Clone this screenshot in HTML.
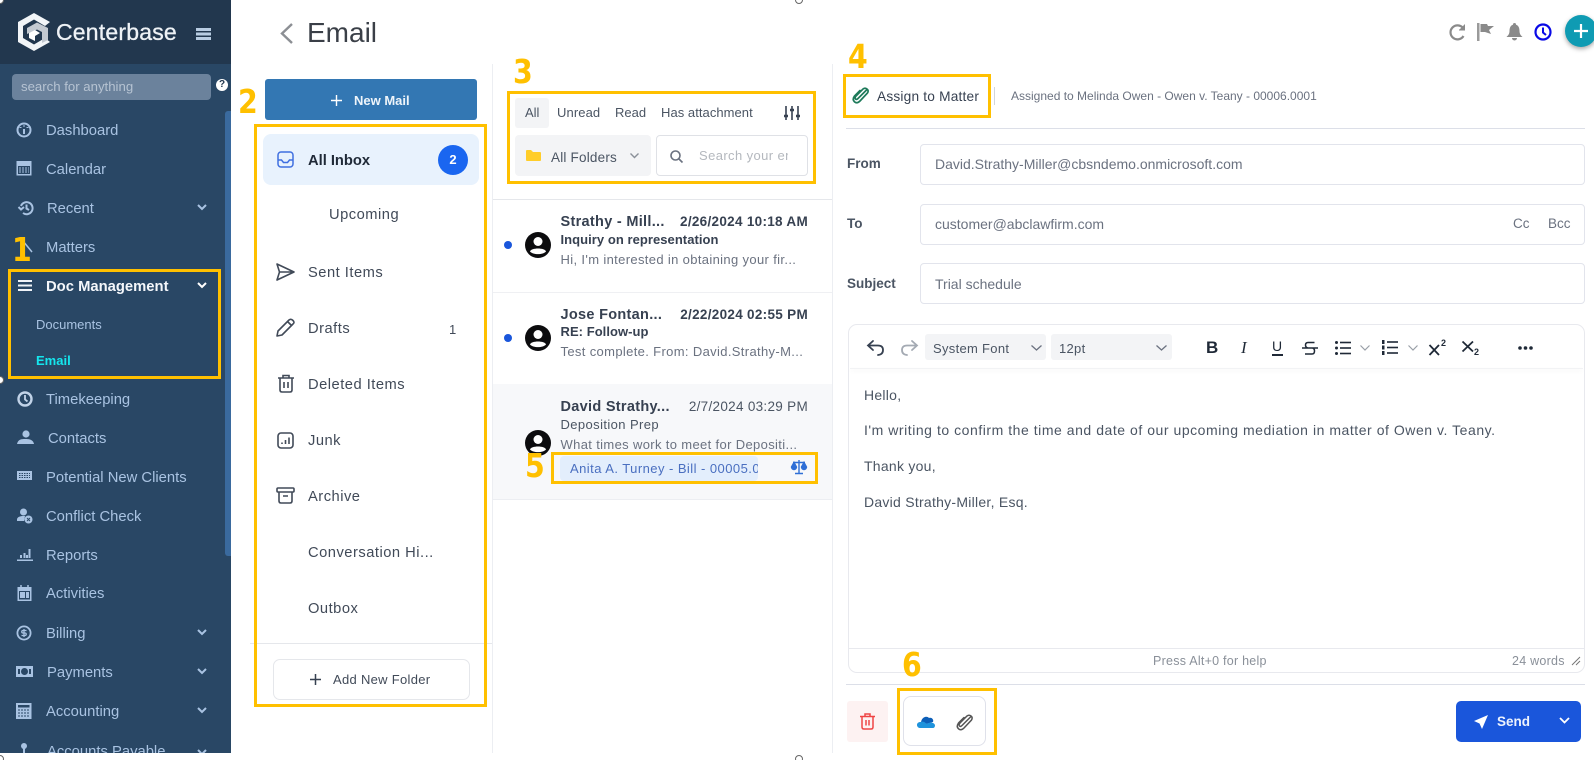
<!DOCTYPE html>
<html><head><meta charset="utf-8"><title>Email</title>
<style>
html,body{margin:0;padding:0;background:#fff;width:1594px;height:760px;overflow:hidden}
body{position:relative;font-family:"Liberation Sans",sans-serif;color:#374151}
.a{position:absolute}
.t{position:absolute;line-height:20px;height:20px;white-space:nowrap}
svg{position:absolute;overflow:visible}
.y{position:absolute;border:3px solid #ffc000;box-sizing:border-box}
.d{position:absolute;font:bold 33px/33px "DejaVu Sans",sans-serif;color:#ffc000;transform:scaleX(.86);transform-origin:left top}
.n{font-size:14.8px;color:#a9c3e2;left:46px}
.f{font-size:14.7px;color:#414a58;letter-spacing:.5px;left:308px}
.i{position:absolute;left:920px;width:665px;height:41px;box-sizing:border-box;border:1.5px solid #e2e4ec;border-radius:4px}
.v{font-size:14px;color:#6b7280;left:935px;letter-spacing:0}
.l{font-size:13.5px;font-weight:bold;color:#4b5563;left:847px}
.m{left:560.5px;font-size:14.5px;font-weight:bold;color:#374151;letter-spacing:.3px}
.dt{right:786px;font-size:13.5px;color:#374151;letter-spacing:.3px}
.s{left:560.5px;font-size:13px;color:#374151;letter-spacing:.05px}
.p{left:560.5px;font-size:13px;color:#6b7280;letter-spacing:.35px}
.b{font-size:14px;color:#4b5563;left:864px;letter-spacing:.26px}
.h{width:8px;height:8px;border:1px solid #666;border-radius:50%;background:#fff;position:absolute;box-sizing:border-box}
</style></head><body>

<!-- SIDEBAR -->
<div class="a" style="left:0;top:0;width:231px;height:753px;background:#294765"></div>
<div class="a" style="left:0;top:0;width:231px;height:64px;background:#22374e"></div>
<svg style="left:17px;top:13px" width="34" height="38" viewBox="0 0 34 38">
<path d="M17 0 33 9 28 13 17 6.500 6 13V25L17 31.500 28 25 33 29 17 38 1 29V9Z" fill="#f2f5f8"/>
<path d="M10 15 20 9.500 31 15V27L25 30V19L20 16.500 10 21Z" fill="#c3c9d1"/>
<path d="M12 20 18 17 23 20 18 23V28L12 25Z" fill="#fff"/>
</svg>
<div class="t" style="left:56px;top:19px;height:26px;line-height:26px;font-size:23px;color:#eef2f6;letter-spacing:.2px;-webkit-text-stroke:.3px #eef2f6">Centerbase</div>
<div class="a" style="left:196px;top:28px;width:15px;height:2.500px;background:#b8cce2;box-shadow:0 4.500px 0 #b8cce2,0 9px 0 #b8cce2"></div>
<div class="a" style="left:12px;top:74px;width:199px;height:26px;background:#6b829c;border-radius:4px"></div>
<div class="t" style="left:21px;top:77px;font-size:13.2px;color:#b6c3d2">search for anything</div>
<div class="a" style="left:216px;top:79px;width:12px;height:12px;background:#fff;border-radius:50%;font:bold 10px/12px 'Liberation Sans',sans-serif;color:#22374e;text-align:center">?</div>
<div class="a" style="left:225px;top:111px;width:6px;height:445px;background:#3a6a9e;border-radius:3px 0 0 3px"></div>

<div class="t n" style="top:121px">Dashboard</div>
<div class="t n" style="top:160px">Calendar</div>
<div class="t n" style="top:199px;left:47px">Recent</div>
<div class="t n" style="top:238px">Matters</div>
<div class="t" style="left:46px;top:277px;font-size:14.8px;font-weight:bold;color:#f4f7fb">Doc Management</div>
<div class="t n" style="left:36px;top:315px;font-size:13px;color:#a9c3e2">Documents</div>
<div class="t" style="left:36px;top:351px;font-size:13px;font-weight:bold;color:#14e6ee">Email</div>
<div class="t n" style="top:390px">Timekeeping</div>
<div class="t n" style="top:429px;left:48px">Contacts</div>
<div class="t n" style="top:468px">Potential New Clients</div>
<div class="t n" style="top:507px">Conflict Check</div>
<div class="t n" style="top:546px">Reports</div>
<div class="t n" style="top:584px">Activities</div>
<div class="t n" style="top:624px">Billing</div>
<div class="t n" style="top:663px;left:47px">Payments</div>
<div class="t n" style="top:702px">Accounting</div>
<div class="a" style="left:0;top:735px;width:231px;height:18px;overflow:hidden"><div class="t n" style="top:7px;left:47px">Accounts Payable</div>
<svg style="left:20px;top:8px" width="8" height="10"><circle cx="4" cy="3" r="3" fill="#a9c3e2"/><path d="M4 5V10" stroke="#a9c3e2" stroke-width="2"/></svg>
<svg style="left:197px;top:14px" width="10" height="6" fill="none" stroke="#a9c3e2" stroke-width="2"><path d="M1 1 5 5 9 1"/></svg></div>

<!-- nav icons -->
<svg style="left:16px;top:122px" width="16" height="16" fill="none" stroke="#a9c3e2" stroke-width="2"><circle cx="8" cy="8" r="6.500"/><path d="M8 7V12M4.500 5V6M11.500 5V6M8 3.500V4.500"/></svg>
<svg style="left:16px;top:160px" width="16" height="16"><rect x="0.500" y="1" width="15" height="14.500" fill="#a9c3e2"/><rect x="2" y="6" width="12" height="8" fill="#294765"/><path d="M3 8H13M3 10H13M3 12H13" stroke="#a9c3e2" stroke-dasharray="2 1"/></svg>
<svg style="left:18px;top:200px" width="16" height="16" fill="none" stroke="#a9c3e2" stroke-width="2"><path d="M3 6A6 6 0 1 1 5 13M0.500 7 3 9.500 6 7M8.500 4.500V8.500L11 10"/></svg>
<svg style="left:22px;top:240px" width="11" height="14" fill="none" stroke="#a9c3e2" stroke-width="1.500"><path d="M1 1 10 12"/></svg>
<div class="a" style="left:18px;top:280px;width:14px;height:2px;background:#f0f4f8;box-shadow:0 4.500px 0 #f0f4f8,0 9px 0 #f0f4f8"></div>
<svg style="left:17px;top:391px" width="16" height="16" fill="none" stroke="#c1d3e8" stroke-width="2.400"><circle cx="8" cy="8" r="6.500"/><path d="M8 4V8.500L10.500 10.500" stroke-width="1.800"/></svg>
<svg style="left:17px;top:430px" width="17" height="15" fill="#a9c3e2"><circle cx="9" cy="4" r="3.600"/><path d="M0 14C1 9 5 9 8 9S16 9 17 14Z"/><path d="M4 2C3 5 4 7 6 8" stroke="#294765" fill="none"/></svg>
<svg style="left:17px;top:471px" width="15" height="9"><rect width="15" height="9" fill="#a9c3e2"/><path d="M2 2.500H13M2 4.500H13M2 6.500H13" stroke="#294765" stroke-dasharray="1.500 1"/></svg>
<svg style="left:17px;top:508px" width="16" height="16" fill="#a9c3e2"><circle cx="6.500" cy="4" r="3.500"/><path d="M0 11C1 8 5 8 8 8L7 13H0Z"/><circle cx="11.500" cy="11.500" r="4"/><path d="M10 10 13 13M13 10 10 13" stroke="#294765"/></svg>
<svg style="left:17px;top:548px" width="16" height="13" fill="#a9c3e2"><rect x="0" y="11.500" width="16" height="1.500"/><rect x="3" y="7" width="2" height="3"/><rect x="6.500" y="5" width="2" height="5"/><rect x="9" y="7" width="2" height="3"/><rect x="11.500" y="1" width="2" height="9"/></svg>
<svg style="left:17px;top:585px" width="15" height="16"><rect x="0.500" y="2" width="14" height="14" fill="#a9c3e2"/><rect x="2" y="6" width="11" height="8.500" fill="#294765"/><rect x="3" y="7" width="5" height="6" fill="#a9c3e2"/><rect x="9" y="7" width="3" height="6" fill="#a9c3e2"/><path d="M4 0V3M11 0V3" stroke="#a9c3e2" stroke-width="1.500"/></svg>
<svg style="left:16px;top:625px" width="16" height="16" fill="none" stroke="#a9c3e2" stroke-width="1.800"><circle cx="8" cy="8" r="6.600"/><path d="M10.500 5.500H7A1.200 1.200 0 0 0 7 8H9A1.200 1.200 0 0 1 9 10.500H5.500M8 4V12" stroke-width="1.300"/></svg>
<svg style="left:16px;top:666px" width="17" height="11"><rect width="17" height="11" fill="#a9c3e2"/><circle cx="8.500" cy="5.500" r="3.500" fill="#294765"/><rect x="2" y="3" width="2" height="5" fill="#294765"/><rect x="13" y="3" width="2" height="5" fill="#294765"/></svg>
<svg style="left:16px;top:703px" width="16" height="16"><rect width="15.500" height="16" fill="#a9c3e2"/><rect x="2" y="2" width="11.500" height="2.500" fill="#294765"/><path d="M2 7H13.500M2 10H13.500M2 13H13.500" stroke="#294765" stroke-dasharray="2 1"/></svg>
<!-- nav chevrons -->
<svg style="left:197px;top:204px" width="10" height="6" fill="none" stroke="#a9c3e2" stroke-width="2"><path d="M1 1 5 5 9 1"/></svg>
<svg style="left:197px;top:282px" width="10" height="6" fill="none" stroke="#fff" stroke-width="2"><path d="M1 1 5 5 9 1"/></svg>
<svg style="left:197px;top:629px" width="10" height="6" fill="none" stroke="#a9c3e2" stroke-width="2"><path d="M1 1 5 5 9 1"/></svg>
<svg style="left:197px;top:668px" width="10" height="6" fill="none" stroke="#a9c3e2" stroke-width="2"><path d="M1 1 5 5 9 1"/></svg>
<svg style="left:197px;top:707px" width="10" height="6" fill="none" stroke="#a9c3e2" stroke-width="2"><path d="M1 1 5 5 9 1"/></svg>

<div class="y" style="left:8px;top:269px;width:213px;height:110px"></div>
<div class="d" style="left:12px;top:233px">1</div>

<!-- TITLE -->
<svg style="left:280px;top:23px" width="13" height="21" fill="none" stroke="#8c8f94" stroke-width="2.400"><path d="M12 1 2 10.500 12 20"/></svg>
<div class="t" style="left:307px;top:17px;height:32px;line-height:32px;font-size:28px;color:#3a3f47">Email</div>

<!-- COLUMN LINES -->
<div class="a" style="left:492px;top:64px;width:1px;height:689px;background:#eceef2"></div>
<div class="a" style="left:832px;top:64px;width:1px;height:689px;background:#eceef2"></div>

<!-- FOLDERS -->
<div class="a" style="left:265px;top:79px;width:212px;height:41px;background:#3377b3;border-radius:3px"></div>
<svg style="left:331px;top:95px" width="11" height="11" stroke="#fff" stroke-width="1.400"><path d="M5.500 0V11M0 5.500H11"/></svg>
<div class="t" style="left:354px;top:91px;font-size:13px;font-weight:bold;color:#eef4fa">New Mail</div>
<div class="a" style="left:263px;top:134px;width:216px;height:51px;background:#e8f2fd;border-radius:8px"></div>
<svg style="left:277px;top:151px" width="17" height="17" fill="none" stroke="#3f6fe0" stroke-width="1.500"><rect x="1" y="1" width="15" height="15" rx="3"/><path d="M1 9H4.500L6.500 11.500H10.500L12.500 9H16"/></svg>
<div class="t f" style="top:151px;font-weight:bold;color:#1f2937;letter-spacing:0">All Inbox</div>
<div class="a" style="left:438px;top:145px;width:30px;height:30px;border-radius:50%;background:#1a66f0;font:bold 13px/30px 'Liberation Sans',sans-serif;color:#fff;text-align:center">2</div>
<div class="t f" style="left:329px;top:205px">Upcoming</div>
<svg style="left:276px;top:262px" width="19" height="19" fill="none" stroke="#414a58" stroke-width="1.600" stroke-linejoin="round"><path d="M1 2 18 10 1 18 3.500 10ZM3.500 10H18"/></svg>
<div class="t f" style="top:263px">Sent Items</div>
<svg style="left:276px;top:318px" width="19" height="19" fill="none" stroke="#414a58" stroke-width="1.600" stroke-linejoin="round"><path d="M1 18 2 13 13 2Q15 .5 17 2.500T17 6L6 17ZM11.500 3.500 15.500 7.500"/></svg>
<div class="t f" style="top:319px">Drafts</div>
<div class="t" style="left:449px;top:320px;font-size:13px;color:#414a58">1</div>
<svg style="left:278px;top:374px" width="16" height="19" fill="none" stroke="#414a58" stroke-width="1.600"><path d="M0 4H16M5 4V1.500H11V4M2 4V16Q2 18 4 18H12Q14 18 14 16V4M6 8V14M10 8V14"/></svg>
<div class="t f" style="top:375px">Deleted Items</div>
<svg style="left:277px;top:432px" width="17" height="17" fill="none" stroke="#414a58" stroke-width="1.600"><rect x="1" y="1" width="15" height="15" rx="3"/><path d="M5 12V10.500M8.500 12V8M12 12V5.500"/></svg>
<div class="t f" style="top:431px">Junk</div>
<svg style="left:276px;top:487px" width="19" height="17" fill="none" stroke="#414a58" stroke-width="1.600"><rect x="1" y="1" width="17" height="4" rx="1"/><path d="M3 5V14Q3 16 5 16H14Q16 16 16 14V5M7 9H12"/></svg>
<div class="t f" style="top:487px">Archive</div>
<div class="t f" style="top:543px">Conversation Hi...</div>
<div class="t f" style="top:599px">Outbox</div>
<div class="a" style="left:250px;top:643px;width:242px;height:1px;background:#e5e7eb"></div>
<div class="a" style="left:273px;top:659px;width:197px;height:41px;box-sizing:border-box;border:1px solid #e5e7eb;border-radius:7px"></div>
<svg style="left:310px;top:674px" width="11" height="11" stroke="#374151" stroke-width="1.500"><path d="M5.500 0V11M0 5.500H11"/></svg>
<div class="t" style="left:333px;top:670px;font-size:13px;color:#414a58;letter-spacing:.3px">Add New Folder</div>
<div class="y" style="left:254px;top:124px;width:233px;height:583px"></div>
<div class="d" style="left:238px;top:85px">2</div>

<!-- LIST FILTERS -->
<div class="a" style="left:515px;top:98px;width:34px;height:30px;background:#f3f4f6;border-radius:3px"></div>
<div class="t" style="left:525px;top:103px;font-size:13px;color:#4b5563">All</div>
<div class="t" style="left:557px;top:103px;font-size:13px;color:#4b5563;letter-spacing:.1px">Unread</div>
<div class="t" style="left:615px;top:103px;font-size:13px;color:#4b5563">Read</div>
<div class="t" style="left:661px;top:103px;font-size:13px;color:#4b5563;letter-spacing:.05px">Has attachment</div>
<svg style="left:784px;top:106px" width="16" height="14" stroke="#374151" stroke-width="1.600"><path d="M2 0V14M8 0V14M14 0V14"/><path d="M0 10H4M6 4H10M12 10H16" stroke-width="2.400"/></svg>
<div class="a" style="left:515px;top:135px;width:136px;height:41px;background:#f3f4f6;border-radius:4px"></div>
<svg style="left:526px;top:150px" width="15" height="11"><path d="M0 1Q0 0 1 0H5L7 2H14Q15 2 15 3V10Q15 11 14 11H1Q0 11 0 10Z" fill="#ffcd29"/></svg>
<div class="t" style="left:551px;top:148px;font-size:13.500px;color:#4b5563;letter-spacing:.2px">All Folders</div>
<svg style="left:630px;top:153px" width="9" height="6" fill="none" stroke="#8a9099" stroke-width="1.400"><path d="M.5 .5 4.500 4.500 8.500 .5"/></svg>
<div class="a" style="left:656px;top:135px;width:152px;height:41px;box-sizing:border-box;border:1.500px solid #dfe1e6;border-radius:4px"></div>
<svg style="left:670px;top:150px" width="13" height="13" fill="none" stroke="#6b7280" stroke-width="1.600"><circle cx="5.500" cy="5.500" r="4.500"/><path d="M9 9 12.500 12.500"/></svg>
<div class="a" style="left:699px;top:145px;width:89px;height:22px;overflow:hidden"><div class="t" style="left:0;top:1px;font-size:13px;color:#b4b8be;letter-spacing:.4px">Search your email</div></div>
<div class="y" style="left:507px;top:91px;width:309px;height:93px"></div>
<div class="d" style="left:513px;top:55px">3</div>

<!-- LIST ITEMS -->
<div class="a" style="left:493px;top:199px;width:339px;height:1px;background:#e5e7eb"></div>
<div class="a" style="left:493px;top:292px;width:339px;height:1px;background:#eff0f3"></div>
<div class="a" style="left:493px;top:384px;width:339px;height:115px;background:#f7f8fa;border-bottom:1px solid #eceef2"></div>

<div class="a" style="left:504px;top:241px;width:8px;height:8px;border-radius:50%;background:#1a56db"></div>
<div class="a" style="left:504px;top:334px;width:8px;height:8px;border-radius:50%;background:#1a56db"></div>
<svg style="left:525px;top:232px" width="26" height="26"><circle cx="13" cy="13" r="13" fill="#0c0c0e"/><circle cx="13" cy="9.500" r="4.500" fill="#fff"/><path d="M5 19.500C6 15.500 20 15.500 21 19.500 18 23 8 23 5 19.500Z" fill="#fff"/></svg>
<svg style="left:525px;top:325px" width="26" height="26"><circle cx="13" cy="13" r="13" fill="#0c0c0e"/><circle cx="13" cy="9.500" r="4.500" fill="#fff"/><path d="M5 19.500C6 15.500 20 15.500 21 19.500 18 23 8 23 5 19.500Z" fill="#fff"/></svg>
<svg style="left:525px;top:430px" width="26" height="26"><circle cx="13" cy="13" r="13" fill="#0c0c0e"/><circle cx="13" cy="9.500" r="4.500" fill="#fff"/><path d="M5 19.500C6 15.500 20 15.500 21 19.500 18 23 8 23 5 19.500Z" fill="#fff"/></svg>

<div class="t m" style="top:212px">Strathy - Mill...</div>
<div class="t dt" style="top:212px;font-weight:bold">2/26/2024 10:18 AM</div>
<div class="t s" style="top:230px;font-weight:bold">Inquiry on representation</div>
<div class="t p" style="top:250px">Hi, I'm interested in obtaining your fir...</div>

<div class="t m" style="top:305px">Jose Fontan...</div>
<div class="t dt" style="top:305px;font-weight:bold">2/22/2024 02:55 PM</div>
<div class="t s" style="top:322px;font-weight:bold">RE: Follow-up</div>
<div class="t p" style="top:342px">Test complete. From: David.Strathy-M...</div>

<div class="t m" style="top:397px">David Strathy...</div>
<div class="t dt" style="top:397px;color:#4b5563">2/7/2024 03:29 PM</div>
<div class="t s" style="top:415px;color:#4b5563;letter-spacing:.4px">Deposition Prep</div>
<div class="t p" style="top:435px">What times work to meet for Depositi...</div>

<div class="a" style="left:560px;top:456px;width:198px;height:25px;background:#e3eefc;border-radius:4px;overflow:hidden"><div class="t" style="left:10px;top:3px;font-size:13px;color:#4a6fc0;letter-spacing:.45px">Anita A. Turney - Bill - 00005.0001</div></div>
<svg style="left:791px;top:460px" width="16" height="15" fill="none" stroke="#2f6fd6" stroke-width="1.400"><path d="M8 0V13M4 13.500H12M2 2.500H14"/><path d="M.5 7 3 2.500 5.500 7A2.500 2.500 0 0 1 .5 7ZM10.500 7 13 2.500 15.500 7A2.500 2.500 0 0 1 10.500 7Z" fill="#2f6fd6"/></svg>
<div class="y" style="left:551px;top:452px;width:267px;height:32px"></div>
<div class="d" style="left:525px;top:449px">5</div>

<!-- COMPOSE HEADER -->
<svg style="left:852px;top:87px" width="17" height="17" fill="none" stroke="#1e7a5a" stroke-width="1.700" stroke-linecap="round"><path d="M14.500 3 6 11.500Q4.500 13 3.500 12T4 9L11 2Q13 .5 15 2T15.500 6L8 14Q5 17 2.500 14.800T2.500 9L8 3.500"/></svg>
<div class="t" style="left:877px;top:87px;font-size:13.700px;color:#374151;letter-spacing:.2px">Assign to Matter</div>
<div class="y" style="left:843px;top:74px;width:148px;height:44px"></div>
<div class="d" style="left:848px;top:40px">4</div>
<div class="a" style="left:994px;top:87px;width:1px;height:18px;background:#d1d5db"></div>
<div class="t" style="left:1011px;top:86px;font-size:12px;color:#6b7280;letter-spacing:0">Assigned to Melinda Owen - Owen v. Teany - 00006.0001</div>
<div class="a" style="left:846px;top:128px;width:739px;height:1px;background:#dcdfe8"></div>

<!-- top right icons -->
<svg style="left:1448px;top:24px" width="18" height="17" fill="none" stroke="#8a8a8a" stroke-width="2.200"><path d="M15 4A7 7 0 1 0 15.500 12"/><path d="M16.500 .5V6H11" fill="#8a8a8a" stroke-width="1"/></svg>
<svg style="left:1477px;top:23px" width="17" height="18"><rect x="0" y="0" width="2.500" height="18" fill="#9a9a9a"/><path d="M3.500 1H10L11 3H17L12 7 14 11 8 9H3.500Z" fill="#8a8a8a"/></svg>
<svg style="left:1506px;top:23px" width="17" height="18" fill="#8a8a8a"><path d="M8.500 1.500C12.500 1.500 13.500 5 13.500 8 13.500 11 15 12.500 16.500 14H.5C2 12.500 3.500 11 3.500 8 3.500 5 4.500 1.500 8.500 1.500Z"/><rect x="7" y="0" width="3" height="3" rx="1.500"/><path d="M6 15H11A2.500 2.500 0 0 1 6 15Z"/></svg>
<svg style="left:1534px;top:23px" width="18" height="18" fill="none" stroke="#0a0ae6" stroke-width="2.200"><circle cx="9" cy="9" r="7.500"/><path d="M9 4.500V9.500L12 12" stroke-width="2"/></svg>
<div class="a" style="left:1565px;top:15px;width:32px;height:32px;border-radius:50%;background:#0f9bb3;box-shadow:0 2px 5px rgba(0,0,0,.35)"></div>
<svg style="left:1574px;top:24px" width="14" height="14" stroke="#fff" stroke-width="2.200"><path d="M7 0V14M0 7H14"/></svg>

<!-- FIELDS -->
<div class="t l" style="top:154px">From</div>
<div class="i" style="top:144px"></div>
<div class="t v" style="top:154px">David.Strathy-Miller@cbsndemo.onmicrosoft.com</div>
<div class="t l" style="top:214px">To</div>
<div class="i" style="top:204px"></div>
<div class="t v" style="top:214px">customer@abclawfirm.com</div>
<div class="t" style="left:1513px;top:214px;font-size:13.500px;color:#6b7280">Cc</div>
<div class="t" style="left:1548px;top:214px;font-size:13.500px;color:#6b7280">Bcc</div>
<div class="t l" style="top:274px">Subject</div>
<div class="i" style="top:263px"></div>
<div class="t v" style="top:274px">Trial schedule</div>

<!-- EDITOR -->
<div class="a" style="left:848px;top:324px;width:737px;height:349px;box-sizing:border-box;border:1.500px solid #e8e9ee;border-radius:9px"></div>
<div class="a" style="left:850px;top:368px;width:733px;height:1px;background:#f2f3f5;box-shadow:0 2px 4px rgba(0,0,0,.07)"></div>
<svg style="left:867px;top:340px" width="17" height="16" fill="none" stroke="#374151" stroke-width="1.800" stroke-linecap="round"><path d="M6 1 1 5.500 6 10M1 5.500H11Q16 5.500 16 10T11 15"/></svg>
<svg style="left:901px;top:340px" width="17" height="16" fill="none" stroke="#a4aab3" stroke-width="1.800" stroke-linecap="round"><path d="M11 1 16 5.500 11 10M16 5.500H6Q1 5.500 1 10T6 15"/></svg>
<div class="a" style="left:925px;top:334px;width:121px;height:26px;background:#f3f4f6;border-radius:3px"></div>
<div class="t" style="left:933px;top:339px;font-size:13px;color:#4b5563;letter-spacing:.3px">System Font</div>
<svg style="left:1031px;top:345px" width="11" height="6" fill="none" stroke="#6b7280" stroke-width="1.300"><path d="M.5 .5 5.500 5 10.500 .5"/></svg>
<div class="a" style="left:1051px;top:334px;width:121px;height:26px;background:#f3f4f6;border-radius:3px"></div>
<div class="t" style="left:1059px;top:339px;font-size:13px;color:#4b5563;letter-spacing:.3px">12pt</div>
<svg style="left:1156px;top:345px" width="11" height="6" fill="none" stroke="#6b7280" stroke-width="1.300"><path d="M.5 .5 5.500 5 10.500 .5"/></svg>
<div class="t" style="left:1206px;top:338px;font-size:17px;font-weight:bold;color:#1f2937">B</div>
<div class="t" style="left:1241px;top:338px;font-size:17px;font-style:italic;font-family:'Liberation Serif',serif;color:#1f2937">I</div>
<div class="t" style="left:1272px;top:336px;font-size:14px;color:#1f2937">U</div>
<div class="a" style="left:1272px;top:354px;width:11px;height:1.500px;background:#1f2937"></div>
<svg style="left:1302px;top:340px" width="16" height="16" fill="none" stroke="#1f2937" stroke-width="1.500"><path d="M0 8H16M12.500 2.500H6Q3.500 2.500 3.500 5T6 8H10Q12.500 8 12.500 11T10 14H3"/></svg>
<svg style="left:1335px;top:341px" width="16" height="14" fill="#1f2937"><circle cx="1.500" cy="1.500" r="1.500"/><circle cx="1.500" cy="7" r="1.500"/><circle cx="1.500" cy="12.500" r="1.500"/><rect x="5" y=".7" width="11" height="1.600"/><rect x="5" y="6.200" width="11" height="1.600"/><rect x="5" y="11.700" width="11" height="1.600"/></svg>
<svg style="left:1360px;top:345px" width="10" height="6" fill="none" stroke="#9aa0a8" stroke-width="1.200"><path d="M.5 .5 5 5 9.500 .5"/></svg>
<svg style="left:1382px;top:340px" width="16" height="15" fill="#1f2937"><rect x="0" y="0" width="2.500" height="4"/><rect x="0" y="5.500" width="2.500" height="4"/><rect x="0" y="11" width="2.500" height="4"/><rect x="5" y="1.200" width="11" height="1.600"/><rect x="5" y="6.700" width="11" height="1.600"/><rect x="5" y="12.200" width="11" height="1.600"/></svg>
<svg style="left:1408px;top:345px" width="10" height="6" fill="none" stroke="#9aa0a8" stroke-width="1.200"><path d="M.5 .5 5 5 9.500 .5"/></svg>
<svg style="left:1429px;top:340px" width="18" height="16" fill="none" stroke="#1f2937" stroke-width="1.800"><path d="M.5 5 10 15M10 5 .5 15"/></svg>
<div class="t" style="left:1441px;top:333px;font-size:9px;font-weight:bold;color:#1f2937">2</div>
<svg style="left:1462px;top:341px" width="12" height="11" fill="none" stroke="#1f2937" stroke-width="1.800"><path d="M.5 .5 11 10.500M11 .5 .5 10.500"/></svg>
<div class="t" style="left:1474px;top:342px;font-size:9px;font-weight:bold;color:#1f2937">2</div>
<svg style="left:1518px;top:346px" width="15" height="4" fill="#1f2937"><circle cx="2" cy="2" r="1.800"/><circle cx="7.500" cy="2" r="1.800"/><circle cx="13" cy="2" r="1.800"/></svg>

<div class="t b" style="top:385px">Hello,</div>
<div class="t b" style="top:420px;letter-spacing:.54px">I'm writing to confirm the time and date of our upcoming mediation in matter of Owen v. Teany.</div>
<div class="t b" style="top:456px">Thank you,</div>
<div class="t b" style="top:492px">David Strathy-Miller, Esq.</div>

<div class="a" style="left:849px;top:648px;width:735px;height:1px;background:#e8e9ee"></div>
<div class="t" style="left:1153px;top:651px;font-size:12.500px;color:#8a9099;letter-spacing:.25px">Press Alt+0 for help</div>
<div class="t" style="left:1512px;top:651px;font-size:12.500px;color:#8a9099;letter-spacing:.25px">24 words</div>
<svg style="left:1572px;top:657px" width="8" height="8" stroke="#777" stroke-width="1"><path d="M0 8 8 0M4 8 8 4"/></svg>
<div class="a" style="left:846px;top:684px;width:739px;height:1px;background:#dcdfe8"></div>

<!-- FOOT -->
<div class="a" style="left:847px;top:701px;width:41px;height:41px;background:#fdf2f2;border-radius:3px"></div>
<svg style="left:860px;top:713px" width="15" height="17" fill="none" stroke="#ef4444" stroke-width="1.500"><path d="M0 3.500H15M5 3.500V1H10V3.500M2 3.500V14Q2 16 4 16H11Q13 16 13 14V3.500M6 7V12.500M9 7V12.500"/></svg>
<div class="a" style="left:903px;top:696px;width:83px;height:50px;box-sizing:border-box;border:1.500px solid #dfe1ea;border-radius:8px"></div>
<svg style="left:917px;top:715px" width="18" height="13"><path d="M4 8C4 3 9 0 12 3 15 2 17 5 16 7L9 9Z" fill="#0d5fb8"/><path d="M2.500 13C-1 12 -1 7 3.500 7 6 6 8 7 9.500 9 13 6.500 18 7.500 18 10.500 18 12 17 13 16 13Z" fill="#1f93dc"/></svg>
<svg style="left:956px;top:714px" width="17" height="17" fill="none" stroke="#555" stroke-width="1.500" stroke-linecap="round"><path d="M14.500 3 6 11.500Q4.500 13 3.500 12T4 9L11 2Q13 .5 15 2T15.500 6L8 14Q5 17 2.500 14.800T2.500 9L8 3.500"/></svg>
<div class="y" style="left:897px;top:688px;width:100px;height:67px"></div>
<div class="d" style="left:902px;top:648px">6</div>
<div class="a" style="left:1456px;top:701px;width:125px;height:41px;background:#1a56db;border-radius:5px"></div>
<svg style="left:1474px;top:715px" width="14" height="14" fill="#fff"><path d="M14 0 0 6 5.500 8.500 8 14Z"/></svg>
<div class="t" style="left:1497px;top:712px;font-size:13.500px;font-weight:bold;color:#eef3fd">Send</div>
<svg style="left:1559px;top:717px" width="11" height="7" fill="none" stroke="#fff" stroke-width="1.800"><path d="M1 1 5.500 5.500 10 1"/></svg>

<!-- selection handles -->
<div class="h" style="left:-4px;top:-4px"></div>
<div class="h" style="left:-4px;top:376px"></div>
<div class="h" style="left:-4px;top:755px"></div>
<div class="h" style="left:795px;top:-4px"></div>
<div class="h" style="left:795px;top:755px"></div>
</body></html>
